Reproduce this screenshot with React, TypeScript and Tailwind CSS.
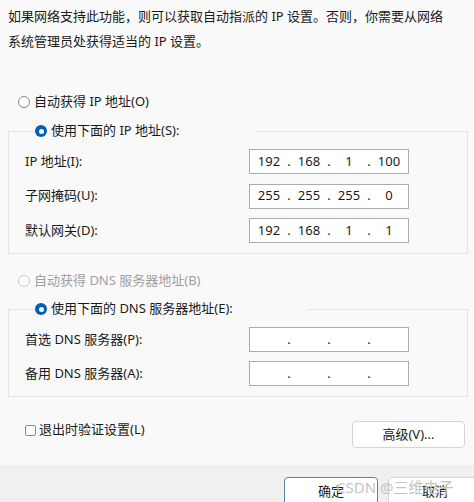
const font = "font-['Noto_Sans','Noto_Sans_CJK_SC',sans-serif]";

function Radio({ checked, disabled }: { checked?: boolean; disabled?: boolean }) {
  if (checked) {
    return (
      <span className="flex h-[12px] w-[12px] shrink-0 items-center justify-center rounded-full bg-[#005fb8]">
        <span className="h-[5px] w-[5px] rounded-full bg-white" />
      </span>
    );
  }
  return (
    <span
      className={
        disabled
          ? 'h-[12px] w-[12px] shrink-0 rounded-full border border-[#c8c8c8] bg-[#fbfbfb]'
          : 'h-[12px] w-[12px] shrink-0 rounded-full border border-[#8a8a8a] bg-white'
      }
    />
  );
}

function IpBox({ parts }: { parts: string[] }) {
  return (
    <div className="ml-auto mr-[58px] flex h-[25px] w-[160px] items-center border border-[#acacac] bg-white pl-[2px] text-[13px] text-[#1a1a1a]">
      {parts.map((p, i) => (
        <div key={i} className="flex items-center">
          <span className="w-[34px] text-center">{p}</span>
          {i < 3 && <span className="w-[6px] text-center">.</span>}
        </div>
      ))}
    </div>
  );
}

function Row({ label, parts }: { label: string; parts: string[] }) {
  return (
    <div className="flex h-[25px] items-center">
      <span className="text-[13px] text-[#1a1a1a]">{label}</span>
      <IpBox parts={parts} />
    </div>
  );
}

export default function App() {
  const empty = ['', '', '', ''];
  return (
    <div className={`relative h-[502px] w-[474px] overflow-hidden bg-[#f9f9f9] ${font}`}>
      <p className="px-2 pt-[4px] text-[13px] leading-[25px] text-[#1a1a1a]">
        如果网络支持此功能，则可以获取自动指派的 IP 设置。否则，你需要从网络
        <br />
        系统管理员处获得适当的 IP 设置。
      </p>

      <label className="mt-[38px] ml-[18px] flex h-[20px] items-center gap-[4px] text-[13px] text-[#1a1a1a]">
        <Radio />
        自动获得 IP 地址(O)
      </label>

      <fieldset className="mt-[9px] ml-2 w-[460px] border border-[#e3e3e3] pb-[10px] pl-[16px]">
        <legend className="ml-[10px] flex h-[20px] w-[220px] items-center gap-[4px] text-[13px] text-[#1a1a1a]">
          <Radio checked />
          使用下面的 IP 地址(S):
        </legend>
        <div className="mt-[8px] flex flex-col gap-[9.5px]">
          <Row label="IP 地址(I):" parts={['192', '168', '1', '100']} />
          <Row label="子网掩码(U):" parts={['255', '255', '255', '0']} />
          <Row label="默认网关(D):" parts={['192', '168', '1', '1']} />
        </div>
      </fieldset>

      <label className="mt-[17px] ml-[18px] flex h-[20px] items-center gap-[4px] text-[13px] text-[#a0a0a0]">
        <Radio disabled />
        自动获得 DNS 服务器地址(B)
      </label>

      <fieldset className="mt-[8px] ml-2 w-[460px] border border-[#e3e3e3] pb-[10px] pl-[16px]">
        <legend className="ml-[10px] flex h-[20px] w-[272px] items-center gap-[4px] text-[13px] text-[#1a1a1a]">
          <Radio checked />
          使用下面的 DNS 服务器地址(E):
        </legend>
        <div className="mt-[8px] flex flex-col gap-[9px]">
          <Row label="首选 DNS 服务器(P):" parts={empty} />
          <Row label="备用 DNS 服务器(A):" parts={empty} />
        </div>
      </fieldset>

      <div className="mt-[24px] flex h-[27px] items-center justify-between pl-[25px] pr-[9px]">
        <label className="mb-[9px] flex items-center gap-[3px] text-[13px] text-[#1a1a1a]">
          <span className="h-[11px] w-[11px] rounded-[2px] border border-[#8a8a8a] bg-white" />
          退出时验证设置(L)
        </label>
        <button className="h-[27px] w-[113px] rounded-[4px] border border-[#d5d5d5] bg-white text-[13px] text-[#1a1a1a]">
          高级(V)...
        </button>
      </div>

      <div className="mt-[17px] flex h-[40px] gap-[10px] bg-[#f0f0f0] pl-[284px] pt-[12px]">
        <button className="h-[30px] w-[94px] shrink-0 rounded-[4px] border border-[#5d82b0] bg-white text-[13px] text-[#1a1a1a]">
          确定
        </button>
        <button className="h-[30px] w-[94px] shrink-0 rounded-[4px] border border-[#d5d5d5] bg-white text-[13px] text-[#1a1a1a]">
          取消
        </button>
      </div>

      <span className="absolute left-[336px] top-[477px] text-[15px] leading-[20px] text-[#c4c4c4]">
        CSDN @三维电子
      </span>
    </div>
  );
}
